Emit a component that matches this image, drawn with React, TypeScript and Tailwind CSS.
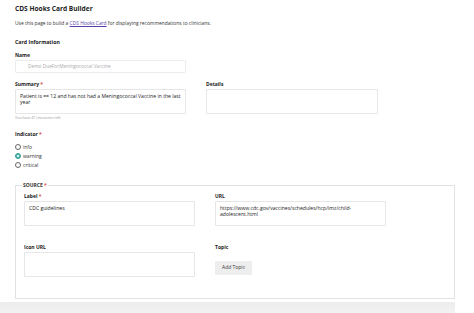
export default function App() {
  const label = "block text-[5px] font-bold text-[#222] leading-[7px]";
  const box =
    "w-full border border-[#e6e6e6] rounded-[1px] bg-white text-[5.1px] leading-[6px] text-[#222] px-[4px] py-[3px]";
  return (
    <div className="w-[474px] h-[313px] overflow-hidden bg-white font-['Open_Sans',sans-serif] text-[#222] relative">
      <div className="px-[15px]">
        <h1 className="pt-[4px] text-[6.6px] font-bold leading-[9px] text-[#222]">
          CDS Hooks Card Builder
        </h1>
        <p className="mt-[7px] text-[4.9px] leading-[7px] text-[#333]">
          Use this page to build a{" "}
          <span className="text-[#5b3fa6] underline">CDS Hooks Card</span> for
          displaying recommendations to clinicians.
        </p>
        <h2 className="mt-[11px] text-[5.2px] font-bold leading-[8px]">
          Card Information
        </h2>

        <div className="mt-[6px] w-[171px]">
          <span className={label}>Name</span>
          <div className="mt-[1px] h-[13px] border border-[#ececec] rounded-[1px] flex items-center pl-[12px] text-[4.8px] text-[#aaa]">
            Demo DueForMeningococcal Vaccine
          </div>
        </div>

        <div className="mt-[8px] grid grid-cols-[171px_172px] gap-x-[20px]">
          <div>
            <span className={label}>
              Summary <span className="text-[#d9534f]">*</span>
            </span>
            <div className={box + " h-[25px] mt-[1px]"}>
              Patient is == 12 and has not had a Meningococcal Vaccine in the last
              year
            </div>
            <div className="mt-[1px] text-[3.6px] leading-[5px] text-[#999]">
              You have 47 characters left.
            </div>
          </div>
          <div>
            <span className={label}>Details</span>
            <div className={box + " h-[25px] mt-[1px]"}></div>
          </div>
        </div>

        <div className="mt-[11px]">
          <span className={label}>
            Indicator <span className="text-[#d9534f]">*</span>
          </span>
          <div className="mt-[5px] flex flex-col gap-[2px]">
            {["info", "warning", "critical"].map((v) => (
              <div key={v} className="flex items-center gap-[2px] h-[7px]">
                <span
                  className={
                    v === "warning"
                      ? "w-[6px] h-[6px] rounded-full bg-[#4fb8b0] border border-[#3a9f98] flex items-center justify-center"
                      : "w-[6px] h-[6px] rounded-full border border-[#666] bg-white"
                  }
                >
                  {v === "warning" && (
                    <span className="w-[2px] h-[2px] rounded-full bg-white" />
                  )}
                </span>
                <span className="text-[5px] leading-[6px] text-[#333]">{v}</span>
              </div>
            ))}
          </div>
        </div>

        <fieldset className="mt-[14px] w-[440px] h-[117px] border border-[#e2e2e2] px-[8px] pb-[8px]">
          <legend className="-ml-[2px] px-[1px] text-[5px] font-bold leading-[7px] text-[#333]">
            SOURCE <span className="text-[#d9534f]">*</span>
          </legend>
          <div className="mt-[4px] grid grid-cols-[171px_171px] gap-x-[20px] gap-y-[18px]">
            <div>
              <span className={label}>
                Label <span className="text-[#d9534f]">*</span>
              </span>
              <div className={box + " h-[25px] mt-[1px]"}>CDC guidelines</div>
            </div>
            <div>
              <span className={label}>URL</span>
              <div className={box + " h-[25px] mt-[1px]"}>
                https://www.cdc.gov/vaccines/schedules/hcp/imz/child-adolescent.html
              </div>
            </div>
            <div>
              <span className={label}>Icon URL</span>
              <div className={box + " h-[25px] mt-[1px]"}></div>
            </div>
            <div>
              <span className={label}>Topic</span>
              <button className="mt-[0px] h-[14px] w-[37px] bg-[#eeeeee] rounded-[1px] text-[5px] text-[#333]">
                Add Topic
              </button>
            </div>
          </div>
        </fieldset>
      </div>

      <div className="mt-[3px] h-[20px] w-[455px] bg-gradient-to-b from-[#ececec] to-[#f8f8f8] pl-[21px] pt-[5px]">
        <span className="text-[5px] font-bold text-[#333] leading-[7px]">SUGGESTIONS</span>
      </div>
    </div>
  );
}
